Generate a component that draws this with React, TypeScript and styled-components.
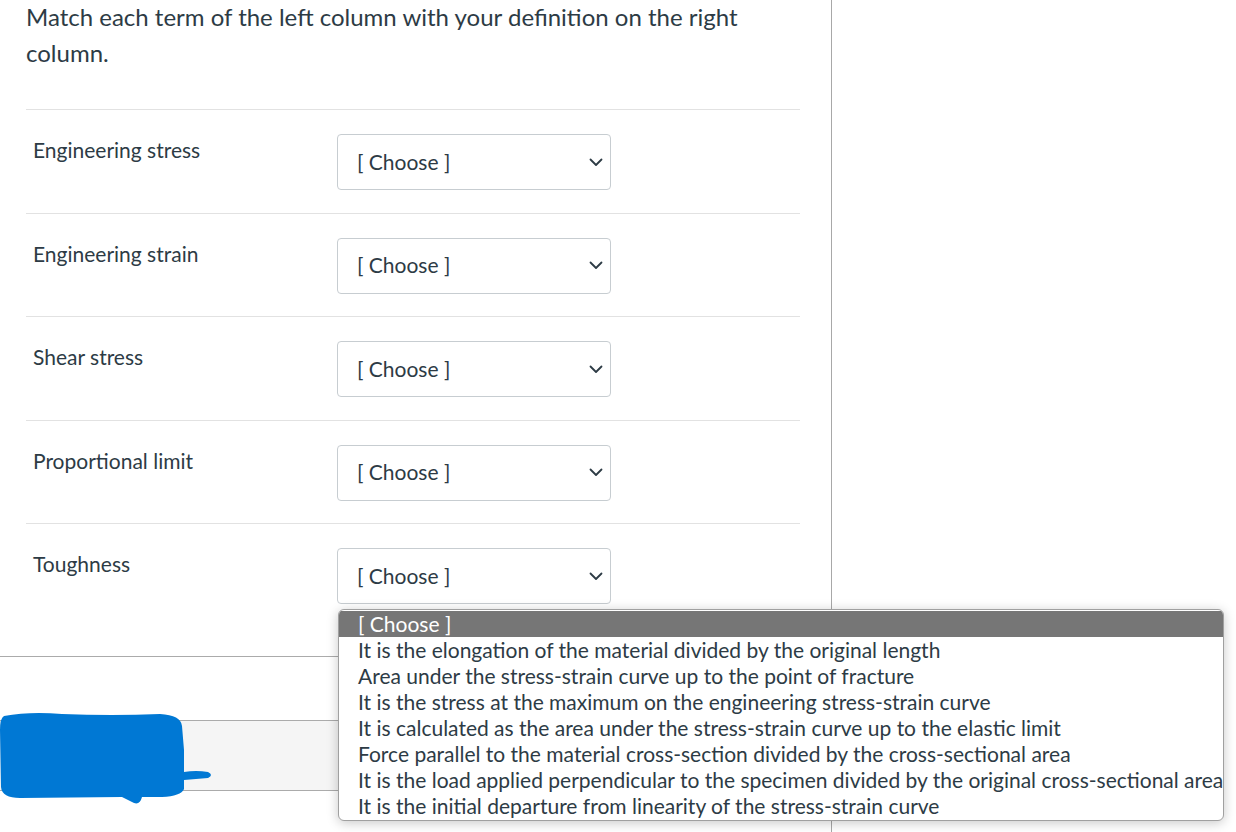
import React from 'react';
import styled, { createGlobalStyle } from 'styled-components';

const GlobalStyle = createGlobalStyle`
  html, body {
    margin: 0;
    padding: 0;
    background: #ffffff;
  }
  body {
    font-family: Lato, "Noto Sans", "Liberation Sans", sans-serif;
    color: #2d3b45;
  }
`;

const terms = [
  'Engineering stress',
  'Engineering strain',
  'Shear stress',
  'Proportional limit',
  'Toughness',
];

const options = [
  '[ Choose ]',
  'It is the elongation of the material divided by the original length',
  'Area under the stress-strain curve up to the point of fracture',
  'It is the stress at the maximum on the engineering stress-strain curve',
  'It is calculated as the area under the stress-strain curve up to the elastic limit',
  'Force parallel to the material cross-section divided by the cross-sectional area',
  'It is the load applied perpendicular to the specimen divided by the original cross-sectional area',
  'It is the initial departure from linearity of the stress-strain curve',
];

const Page = styled.div`
  position: relative;
  display: flex;
  width: 1236px;
  height: 832px;
  overflow: hidden;
`;

const LeftColumn = styled.div`
  width: 832px;
  flex-shrink: 0;
  border-right: 1px solid #a8a8a8;
  box-sizing: border-box;
`;

const QuestionCard = styled.div`
  padding: 0 31px 0 26px;
  height: 658px;
  box-sizing: border-box;
  border-bottom: 1px solid #ababab;
`;

const QuestionText = styled.p`
  margin: -1px 0 38px;
  font-size: 24px;
  line-height: 36px;
  color: #2d3b45;
`;

const MatchTable = styled.div`
  display: flex;
  flex-direction: column;
`;

const MatchRow = styled.div`
  display: flex;
  align-items: flex-start;
  height: 103.6px;
  box-sizing: border-box;
  border-top: 1px solid #e2e2e2;
  padding: 24px 0 0 7px;
`;

const TermLabel = styled.div`
  width: 304px;
  padding-top: 4px;
  font-size: 21px;
  line-height: 24px;
  color: #2d3b45;
`;

const SelectBox = styled.div`
  display: flex;
  align-items: center;
  justify-content: space-between;
  width: 274px;
  height: 56px;
  box-sizing: border-box;
  padding: 0 7px 2px 19px;
  border: 1px solid #c7cdd1;
  border-radius: 4px;
  background: #ffffff;
  font-size: 21px;
  color: #2d3b45;
`;

const Chevron = () => (
  <svg width="14" height="9" viewBox="0 0 14 9" fill="none" style={{ marginTop: 2 }}>
    <polyline points="1.5,1.5 7,7 12.5,1.5" stroke="#2d3b45" strokeWidth="1.8" strokeLinecap="round" strokeLinejoin="round" />
  </svg>
);

const Spacer = styled.div`
  height: 63px;
`;

const GreyBand = styled.div`
  position: relative;
  height: 69px;
  background: #f5f5f5;
  border-top: 1px solid #ababab;
  border-bottom: 1px solid #ababab;
`;

const Scribble = styled.svg`
  position: absolute;
  left: 0;
  top: -11px;
`;

const DropdownList = styled.div`
  position: absolute;
  left: 338px;
  top: 609px;
  width: 886px;
  padding: 1px 0;
  border: 1px solid #a0a0a0;
  border-radius: 6px;
  background: #ffffff;
  box-shadow: 0 2px 12px rgba(0, 0, 0, 0.22);
  overflow: hidden;
  box-sizing: border-box;
`;

const OptionItem = styled.div<{ $active?: boolean }>`
  height: 26px;
  line-height: 26px;
  padding-left: 19px;
  font-size: 21px;
  white-space: nowrap;
  background: ${(p) => (p.$active ? '#767676' : 'transparent')};
  color: ${(p) => (p.$active ? '#ffffff' : '#2d3b45')};
`;

export default function App() {
  return (
    <>
      <GlobalStyle />
      <Page>
        <LeftColumn>
          <QuestionCard>
            <QuestionText>
              Match each term of the left column with your definition on the right column.
            </QuestionText>
            <MatchTable>
              {terms.map((term) => (
                <MatchRow key={term}>
                  <TermLabel>{term}</TermLabel>
                  <SelectBox>
                    <span>[ Choose ]</span>
                    <Chevron />
                  </SelectBox>
                </MatchRow>
              ))}
            </MatchTable>
          </QuestionCard>
          <Spacer />
          <GreyBand>
            <Scribble width="216" height="96" viewBox="0 0 216 96">
              <path
                d="M4 6 Q30 1 62 4 Q112 6 160 4 Q181 5 182 16 L184 40 L184 62 Q196 60 208 62 Q214 65 208 68 Q196 69 184 70 L184 79 Q181 86 162 87 L142 87 Q140 95 134 93 Q128 90 122 87 L20 88 Q2 88 1 77 L0 20 Q0 8 4 6 Z"
                fill="#0078d4"
              />
            </Scribble>
          </GreyBand>
        </LeftColumn>
        <DropdownList>
          {options.map((opt, i) => (
            <OptionItem key={opt} $active={i === 0}>
              {opt}
            </OptionItem>
          ))}
        </DropdownList>
      </Page>
    </>
  );
}
